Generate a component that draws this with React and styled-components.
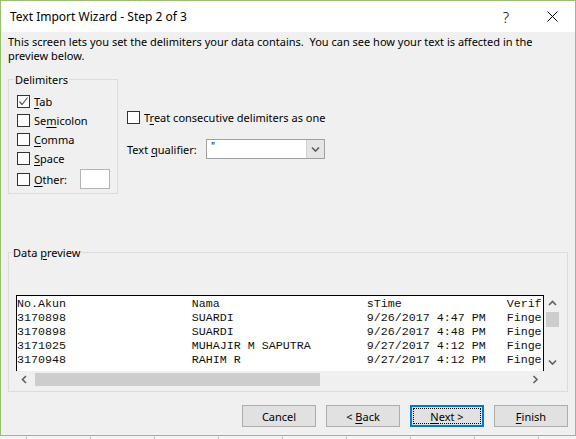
import React from "react";
import styled, { createGlobalStyle } from "styled-components";

const GlobalStyle = createGlobalStyle`
  html, body {
    margin: 0;
    padding: 0;
  }
  body {
    width: 576px;
    height: 439px;
    overflow: hidden;
    background: #fff;
    font-family: "Noto Sans", "Open Sans", sans-serif;
    font-size: 11px;
    color: #000;
  }
  u {
    text-decoration-thickness: 1px;
    text-underline-offset: 2px;
  }
`;

const Window = styled.div`
  box-sizing: border-box;
  width: 576px;
  height: 436px;
  border: 1px solid #97c26a;
  background: #f0f0f0;
  display: flex;
  flex-direction: column;
`;

/* a sliver of the worksheet grid showing under the dialog */
const SheetStrip = styled.div`
  height: 3px;
  background: repeating-linear-gradient(
    to right,
    #f4f4f4 0,
    #f4f4f4 25px,
    #c9c9c9 25px,
    #c9c9c9 26px,
    #f4f4f4 26px,
    #f4f4f4 64px
  );
  background-position: 1px 0;
`;

const TitleBar = styled.div`
  height: 31px;
  background: #fff;
  display: flex;
  align-items: center;
  padding-left: 9px;
  flex-shrink: 0;
`;

const Title = styled.span`
  font-size: 12px;
  flex: 1;
`;

const CaptionButton = styled.div`
  width: 46px;
  height: 31px;
  display: flex;
  align-items: center;
  justify-content: center;
  font-size: 15px;
  font-weight: 300;
`;

const Content = styled.div`
  padding: 0 7px;
  display: flex;
  flex-direction: column;
`;

const Intro = styled.p`
  margin: 3px 0 0 0;
  line-height: 14px;
  white-space: nowrap;
`;

const OptionsRow = styled.div`
  display: flex;
  margin-top: 10px;
`;

const Group = styled.fieldset`
  margin: 0;
  min-width: 0;
  border: 1px solid #dcdcdc;
  box-sizing: border-box;
  width: ${(p) => p.$width || "auto"};
  margin-top: ${(p) => p.$top || "0"};
  padding: ${(p) => p.$padding};
`;

const Legend = styled.legend`
  padding: 0 1px;
  margin-left: ${(p) => p.$indent || "0"};
  line-height: 13px;
`;

const CheckRow = styled.label`
  display: flex;
  align-items: center;
  height: ${(p) => p.$height || "19px"};
  gap: 4px;
`;

const Box = styled.span`
  box-sizing: border-box;
  width: 13px;
  height: 13px;
  border: 1px solid #333;
  background: #fff;
  display: flex;
  align-items: center;
  justify-content: center;
  flex-shrink: 0;
`;

const OtherInput = styled.span`
  box-sizing: border-box;
  width: 30px;
  height: 20px;
  margin-left: auto;
  border: 1px solid #b4b4b4;
  background: #fff;
`;

const SideColumn = styled.div`
  display: flex;
  flex-direction: column;
  margin: 35px 0 0 9px;
`;

const QualifierRow = styled.div`
  display: flex;
  align-items: center;
  margin-top: 12px;
`;

const FieldLabel = styled.span`
  width: 79px;
`;

const Combo = styled.div`
  box-sizing: border-box;
  width: 119px;
  height: 20px;
  border: 1px solid #a0a0a0;
  background: #fff;
  display: flex;
`;

const ComboValue = styled.span`
  flex: 1;
  padding-left: 4px;
  font-size: 10px;
  line-height: 12px;
`;

const ComboArrow = styled.span`
  width: 17px;
  background: #e5e5e5;
  border-left: 1px solid #d0d0d0;
  display: flex;
  align-items: center;
  justify-content: center;
`;

const Preview = styled.div`
  display: grid;
  grid-template-columns: 528px 17px;
  grid-template-rows: 76px 17px;
`;

const Sheet = styled.pre`
  margin: 0;
  box-sizing: border-box;
  border: 1px solid #000;
  border-bottom: none;
  background: #fff;
  overflow: hidden;
  padding-top: 1px;
  font-family: "Liberation Mono", "Courier New", monospace;
  font-size: 11.667px;
  line-height: 14px;
  white-space: pre;
  color: #111;
`;

const ScrollTrack = styled.div`
  display: flex;
  flex-direction: ${(p) => (p.$vertical ? "column" : "row")};
  background: #f0f0f0;
`;

const ScrollArrow = styled.span`
  width: 17px;
  height: 17px;
  flex-shrink: 0;
  display: flex;
  align-items: center;
  justify-content: center;
`;

const ScrollGap = styled.span`
  flex: 1;
  display: flex;
  flex-direction: ${(p) => (p.$vertical ? "column" : "row")};
`;

const Thumb = styled.span`
  background: #cdcdcd;
  margin: ${(p) => (p.$vertical ? "0 2px" : "2px 0 2px 2px")};
  ${(p) => (p.$vertical ? "height: 15px;" : "width: 285px;")}
`;

const ButtonRow = styled.div`
  display: flex;
  justify-content: flex-end;
  gap: 10px;
  margin-top: 13px;
`;

const Button = styled.button`
  box-sizing: border-box;
  width: 74px;
  height: 22px;
  padding: 0;
  font: inherit;
  color: #000;
  background: #e1e1e1;
  border: ${(p) => (p.$focused ? "2px solid #0078d7" : "1px solid #adadad")};
  position: relative;

  ${(p) =>
    p.$focused &&
    `
    &::after {
      content: "";
      position: absolute;
      inset: 1px;
      border: 1px dotted #000;
    }
  `}
`;

function Chevron({ dir }) {
  const points = {
    up: "1,5 4.5,1.5 8,5",
    down: "1,1.5 4.5,5 8,1.5",
    left: "5,1 1.5,4.5 5,8",
    right: "1.5,1 5,4.5 1.5,8",
  }[dir];
  const vertical = dir === "up" || dir === "down";
  return (
    <svg width={vertical ? 9 : 7} height={vertical ? 7 : 9} viewBox={vertical ? "0 0 9 7" : "0 0 7 9"}>
      <polyline points={points} fill="none" stroke="#606060" strokeWidth="1.6" />
    </svg>
  );
}

function Checkbox({ checked }) {
  return (
    <Box>
      {checked && (
        <svg width="11" height="11" viewBox="0 0 11 11">
          <polyline points="1.5,5.5 4,8.5 9.5,1.5" fill="none" stroke="#555" strokeWidth="1.2" />
        </svg>
      )}
    </Box>
  );
}

const columns = [
  ["No.Akun", "Nama", "sTime", "Verif"],
  ["3170898", "SUARDI", "9/26/2017 4:47 PM", "Finge"],
  ["3170898", "SUARDI", "9/26/2017 4:48 PM", "Finge"],
  ["3171025", "MUHAJIR M SAPUTRA", "9/27/2017 4:12 PM", "Finge"],
  ["3170948", "RAHIM R", "9/27/2017 4:12 PM", "Finge"],
];

const previewText = columns
  .map((row) => row[0].padEnd(25) + row[1].padEnd(25) + row[2].padEnd(20) + row[3])
  .join("\n");

export default function App() {
  return (
    <>
      <GlobalStyle />
      <Window>
        <TitleBar>
          <Title>Text Import Wizard - Step 2 of 3</Title>
          <CaptionButton>?</CaptionButton>
          <CaptionButton>
            <svg width="11" height="11" viewBox="0 0 11 11">
              <path d="M0.5 0.5 L10.5 10.5 M10.5 0.5 L0.5 10.5" stroke="#000" strokeWidth="1" />
            </svg>
          </CaptionButton>
        </TitleBar>

        <Content>
          <Intro>
            This screen lets you set the delimiters your data contains.&nbsp; You can see how your text is affected in the
            <br />
            preview below.
          </Intro>

          <OptionsRow>
            <Group $width="110px" $padding="6px 7px 3px 8px">
              <Legend $indent="-3px">Delimiters</Legend>
              <CheckRow>
                <Checkbox checked />
                <span>
                  <u>T</u>ab
                </span>
              </CheckRow>
              <CheckRow>
                <Checkbox />
                <span>
                  Se<u>m</u>icolon
                </span>
              </CheckRow>
              <CheckRow>
                <Checkbox />
                <span>
                  <u>C</u>omma
                </span>
              </CheckRow>
              <CheckRow>
                <Checkbox />
                <span>
                  <u>S</u>pace
                </span>
              </CheckRow>
              <CheckRow $height="22px">
                <Checkbox />
                <span>
                  <u>O</u>ther:
                </span>
                <OtherInput />
              </CheckRow>
            </Group>

            <SideColumn>
              <CheckRow>
                <Checkbox />
                <span>
                  T<u>r</u>eat consecutive delimiters as one
                </span>
              </CheckRow>
              <QualifierRow>
                <FieldLabel>
                  Text <u>q</u>ualifier:
                </FieldLabel>
                <Combo>
                  <ComboValue>"</ComboValue>
                  <ComboArrow>
                    <Chevron dir="down" />
                  </ComboArrow>
                </Combo>
              </QualifierRow>
            </SideColumn>
          </OptionsRow>

          <Group $top="52px" $padding="36px 7px 3px 7px">
            <Legend $indent="-4px">
              Data <u>p</u>review
            </Legend>
            <Preview>
              <Sheet>{previewText}</Sheet>
              <ScrollTrack $vertical>
                <ScrollArrow>
                  <Chevron dir="up" />
                </ScrollArrow>
                <ScrollGap $vertical>
                  <Thumb $vertical />
                </ScrollGap>
                <ScrollArrow>
                  <Chevron dir="down" />
                </ScrollArrow>
              </ScrollTrack>
              <ScrollTrack>
                <ScrollArrow>
                  <Chevron dir="left" />
                </ScrollArrow>
                <ScrollGap>
                  <Thumb />
                </ScrollGap>
                <ScrollArrow>
                  <Chevron dir="right" />
                </ScrollArrow>
              </ScrollTrack>
              <span />
            </Preview>
          </Group>

          <ButtonRow>
            <Button>Cancel</Button>
            <Button>
              &lt; <u>B</u>ack
            </Button>
            <Button $focused>
              <u>N</u>ext &gt;
            </Button>
            <Button>
              <u>F</u>inish
            </Button>
          </ButtonRow>
        </Content>
      </Window>
      <SheetStrip />
    </>
  );
}
